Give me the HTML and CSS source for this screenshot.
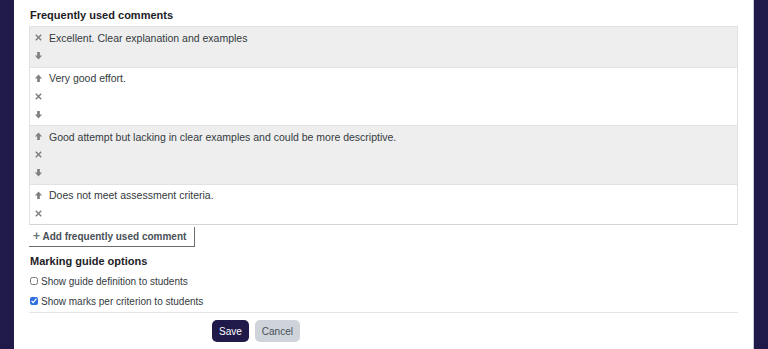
FILE: index.html
```html
<!DOCTYPE html>
<html lang="en">
<head>
  <meta charset="UTF-8">
  <title>Marking guide</title>
  <link rel="stylesheet" href="styles.css">
</head>
<body>
<div class="page">
  <div class="panel">
    <h3 class="section-title">Frequently used comments</h3>
    <div class="comments">
      <div class="comment shaded">
        <div class="actions">
          <span class="act"><svg viewBox="0 0 10 10"><path d="M2 2 L8 8 M8 2 L2 8"/></svg></span>
          <span class="act"><svg viewBox="0 0 10 10"><path class="fill" d="M3.5 1 H6.5 V5 H9 L5 9.5 L1 5 H3.5 Z"/></svg></span>
        </div>
        <div class="text">Excellent. Clear explanation and examples</div>
      </div>
      <div class="comment">
        <div class="actions">
          <span class="act"><svg viewBox="0 0 10 10"><path class="fill" d="M3.5 9 H6.5 V5 H9 L5 0.5 L1 5 H3.5 Z"/></svg></span>
          <span class="act"><svg viewBox="0 0 10 10"><path d="M2 2 L8 8 M8 2 L2 8"/></svg></span>
          <span class="act"><svg viewBox="0 0 10 10"><path class="fill" d="M3.5 1 H6.5 V5 H9 L5 9.5 L1 5 H3.5 Z"/></svg></span>
        </div>
        <div class="text">Very good effort.</div>
      </div>
      <div class="comment shaded">
        <div class="actions">
          <span class="act"><svg viewBox="0 0 10 10"><path class="fill" d="M3.5 9 H6.5 V5 H9 L5 0.5 L1 5 H3.5 Z"/></svg></span>
          <span class="act"><svg viewBox="0 0 10 10"><path d="M2 2 L8 8 M8 2 L2 8"/></svg></span>
          <span class="act"><svg viewBox="0 0 10 10"><path class="fill" d="M3.5 1 H6.5 V5 H9 L5 9.5 L1 5 H3.5 Z"/></svg></span>
        </div>
        <div class="text">Good attempt but lacking in clear examples and could be more descriptive.</div>
      </div>
      <div class="comment">
        <div class="actions">
          <span class="act"><svg viewBox="0 0 10 10"><path class="fill" d="M3.5 9 H6.5 V5 H9 L5 0.5 L1 5 H3.5 Z"/></svg></span>
          <span class="act"><svg viewBox="0 0 10 10"><path d="M2 2 L8 8 M8 2 L2 8"/></svg></span>
        </div>
        <div class="text">Does not meet assessment criteria.</div>
      </div>
    </div>
    <button class="add-btn"><span class="plus">+</span> Add frequently used comment</button>

    <h3 class="section-title options-title">Marking guide options</h3>
    <label class="option"><input type="checkbox"> Show guide definition to students</label>
    <label class="option"><input type="checkbox" checked> Show marks per criterion to students</label>

    <div class="form-buttons">
      <button class="btn btn-primary">Save</button>
      <button class="btn btn-secondary">Cancel</button>
    </div>
  </div>
</div>
</body>
</html>
```

FILE: styles.css
```css
* {
  box-sizing: border-box;
  margin: 0;
  padding: 0;
}
html, body {
  height: 100%;
}
body {
  background-color: #1f1a4a;
  font-family: 'Liberation Sans', Arial, sans-serif;
  color: #1d2125;
  font-size: 10.5px;
  overflow: hidden;
}
.page {
  height: 100%;
  padding: 0 14px;
}
.panel {
  background-color: #ffffff;
  height: 100%;
  padding: 9px 15px 0 15px;
  border-right: 1px solid #c8c8d4;
}
.section-title {
  font-size: 11px;
  font-weight: bold;
  color: #1d2125;
  margin-left: 1px;
  margin-bottom: 5px;
}
.comments {
  border: 1px solid #dee2e6;
  border-bottom-color: #d4d4d4;
}
.comment {
  display: flex;
  padding: 1.5px 4px 2px 4px;
  border-bottom: 1px solid #e2e2e2;
}
.comment:last-child {
  border-bottom: none;
}
.comment.shaded {
  background-color: #eeeeee;
}
.actions {
  display: flex;
  flex-direction: column;
  width: 15px;
}
.act {
  height: 18px;
  display: flex;
  align-items: center;
}
.act svg {
  width: 9px;
  height: 9px;
  stroke: #808080;
  stroke-width: 1.7;
  fill: none;
}
.act svg .fill {
  fill: #808080;
  stroke: none;
}
.text {
  line-height: 18px;
  color: #343a40;
}
.add-btn {
  margin-top: 2px;
  background: #ffffff;
  border: none;
  border-right: 1px solid #6c6c6c;
  border-bottom: 1px solid #6c6c6c;
  font-family: inherit;
  font-size: 10px;
  font-weight: bold;
  color: #495057;
  padding: 2px 8px 2px 4px;
  line-height: 14px;
}
.add-btn .plus {
  font-size: 12px;
  color: #6c757d;
}
.options-title {
  margin-top: 8px;
  margin-bottom: 4px;
}
.option {
  display: flex;
  align-items: center;
  color: #343a40;
  height: 20px;
  font-size: 10px;
}
.option input {
  width: 8px;
  height: 8px;
  margin: 0 3px 0 1px;
  accent-color: #2f6fe0;
}
.form-buttons {
  border-top: 1px solid #e6e6e6;
  margin-top: 1px;
  padding: 7px 0 0 183px;
  display: flex;
  gap: 6px;
}
.btn {
  border: none;
  border-radius: 5px;
  font-family: inherit;
  font-size: 10px;
  height: 22px;
  padding: 0 7px;
}
.btn-primary {
  background-color: #1f1a4a;
  color: #ffffff;
}
.btn-secondary {
  background-color: #ced4da;
  color: #495057;
}
```
